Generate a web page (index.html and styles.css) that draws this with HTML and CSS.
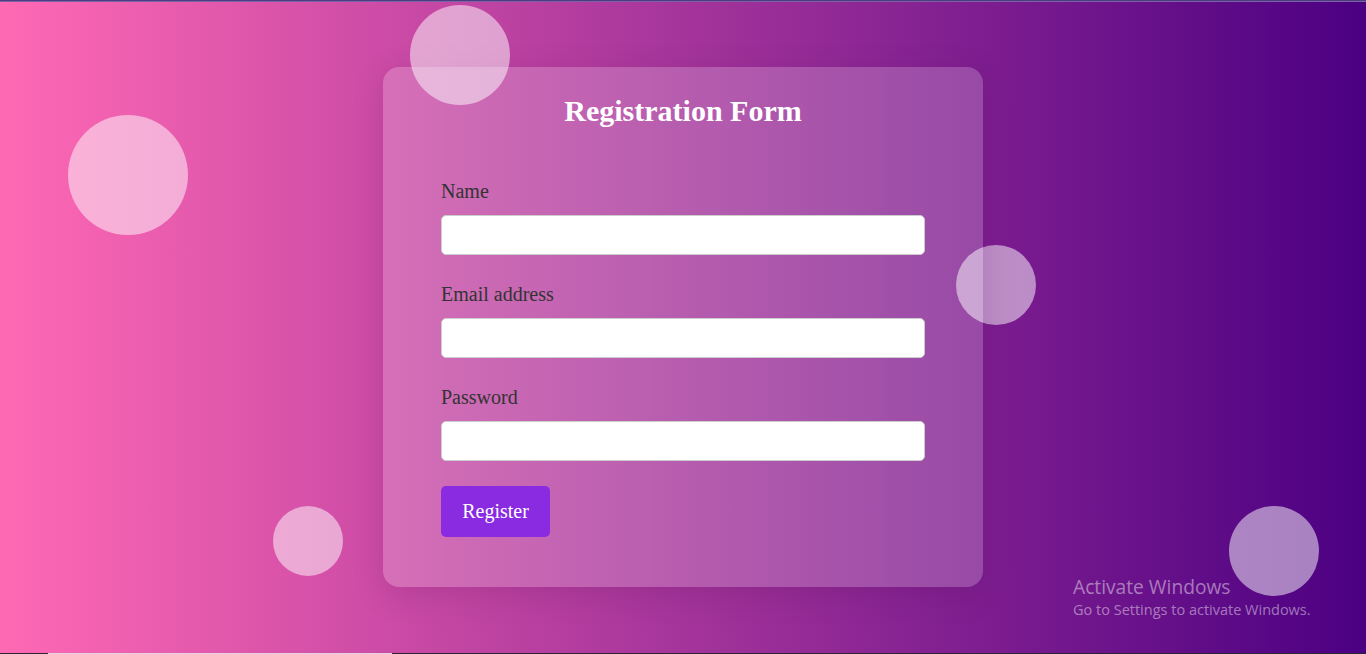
FILE: index.html
```html
<!DOCTYPE html>
<html lang="en">
<head>
<meta charset="utf-8">
<title>Registration Form</title>
<link rel="stylesheet" href="styles.css">
</head>
<body>
  <div class="topline"><div class="topline-dark"></div><div class="topline-light"></div></div>
  <main class="stage">
    <span class="circle c1"></span>
    <span class="circle c2"></span>
    <span class="circle c3"></span>
    <span class="circle c4"></span>
    <span class="circle c5"></span>
    <form class="card">
      <h2 class="title">Registration Form</h2>
      <div class="group">
        <label class="label" for="name">Name</label>
        <input class="field" id="name" type="text">
      </div>
      <div class="group">
        <label class="label" for="email">Email address</label>
        <input class="field" id="email" type="email">
      </div>
      <div class="group last">
        <label class="label" for="password">Password</label>
        <input class="field" id="password" type="password">
      </div>
      <button class="btn" type="button">Register</button>
    </form>
    <div class="watermark">
      <div class="wm-title">Activate Windows</div>
      <div class="wm-sub">Go to Settings to activate Windows.</div>
    </div>
  </main>
  <div class="bottomline"><span class="seg-dark s1"></span><span class="seg-light"></span><span class="seg-dark s2"></span></div>
</body>
</html>
```
FILE: styles.css
```css
* { box-sizing: border-box; }
html, body { margin: 0; padding: 0; }
body {
  height: 100vh;
  display: flex;
  flex-direction: column;
  overflow: hidden;
  font-family: "Liberation Serif", "Times New Roman", serif;
  background: linear-gradient(to right, #ff69b4, #4b0082);
}
.topline { display: flex; flex-direction: column; }
.topline-dark { height: 1px; background: #4a3d80; }
.topline-light { height: 1px; background: #7e5fa8; }
.bottomline { display: flex; height: 1px; }
.seg-dark { background: #2c2434; }
.s1 { width: 48px; }
.seg-light { width: 344px; background: #e2d2e4; }
.s2 { flex: 1; }
.stage {
  flex: 1;
  position: relative;
  display: flex;
  align-items: center;
  justify-content: center;
  padding-bottom: 1px;
}
.circle {
  position: absolute;
  border-radius: 50%;
  background: rgba(255, 255, 255, 0.5);
}
.c1 { left: 68px; top: 113px; width: 120px; height: 120px; }
.c2 { left: 410px; top: 3px; width: 100px; height: 100px; z-index: 2; }
.c3 { left: 956px; top: 243px; width: 80px; height: 80px; }
.c4 { left: 273px; top: 504px; width: 70px; height: 70px; }
.c5 { left: 1229px; top: 504px; width: 90px; height: 90px; z-index: 3; }
.card {
  position: relative;
  z-index: 1;
  width: 600px;
  height: 520px;
  padding: 27px 58px 50px;
  border-radius: 16px;
  background: rgba(255, 255, 255, 0.2);
  box-shadow: 0 8px 32px rgba(60, 0, 60, 0.15);
  display: flex;
  flex-direction: column;
  align-items: stretch;
}
.title {
  margin: 0 0 52px;
  font-size: 30px;
  font-weight: bold;
  color: #fff;
  text-align: center;
  line-height: 34px;
}
.group { display: flex; flex-direction: column; margin-bottom: 28px; }
.group.last { margin-bottom: 25px; }
.label {
  font-size: 20px;
  line-height: 23px;
  color: #333;
  margin-bottom: 12px;
}
.field {
  height: 40px;
  width: 100%;
  border: 1px solid #ccc;
  border-radius: 5px;
  background: #fff;
  font-size: 16px;
  padding: 0 10px;
}
.btn {
  align-self: flex-start;
  width: 109px;
  height: 51px;
  border: none;
  border-radius: 5px;
  background: #8a2be2;
  color: #fff;
  font-family: "Liberation Serif", "Times New Roman", serif;
  font-size: 20px;
  padding: 0;
}
.watermark {
  position: absolute;
  left: 1073px;
  top: 572px;
  z-index: 4;
  font-family: "Open Sans", "Noto Sans", sans-serif;
  color: rgba(255, 255, 255, 0.45);
}
.wm-title { font-size: 19.2px; line-height: 25px; }
.wm-sub { font-size: 14.5px; line-height: 22px; }
```
